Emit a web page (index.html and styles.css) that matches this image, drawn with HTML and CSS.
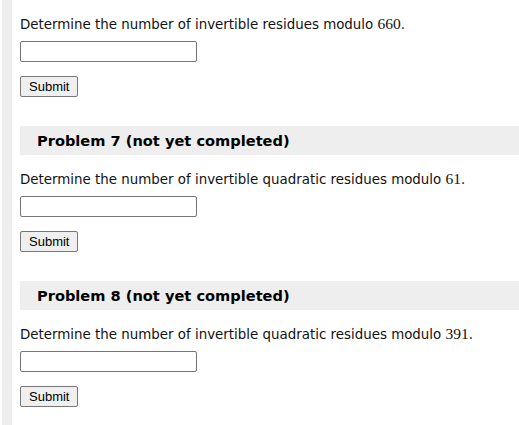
FILE: index.html
```html
<!DOCTYPE html>
<html lang="en">
<head>
    <meta charset="UTF-8">
    <meta name="viewport" content="width=device-width, initial-scale=1.0">
    <title>Problems</title>
    <link rel="stylesheet" href="styles.css">
</head>
<body>
    <div class="page">
        <div class="problem first">
            <p class="question">Determine the number of invertible residues modulo <span class="math">660</span>.</p>
            <input type="text" class="answer">
            <button class="submit">Submit</button>
        </div>
        <div class="problem">
            <h3 class="problem-title">Problem 7 (not yet completed)</h3>
            <p class="question">Determine the number of invertible quadratic residues modulo <span class="math">61</span>.</p>
            <input type="text" class="answer">
            <button class="submit">Submit</button>
        </div>
        <div class="problem">
            <h3 class="problem-title">Problem 8 (not yet completed)</h3>
            <p class="question">Determine the number of invertible quadratic residues modulo <span class="math">391</span>.</p>
            <input type="text" class="answer">
            <button class="submit">Submit</button>
        </div>
    </div>
</body>
</html>
```

FILE: styles.css
```css
body {
    margin: 0;
    padding: 0;
    background-color: #fff;
    font-family: "DejaVu Sans", Verdana, sans-serif;
    color: #111;
}
.page {
    margin-left: 2px;
    border-left: 10px solid #eee;
    padding-left: 8px;
    min-height: 425px;
}
.problem {
    margin-bottom: 29px;
}
.problem.first {
    padding-top: 16px;
}
.problem-title {
    margin: 0;
    background-color: #eee;
    height: 29px;
    line-height: 29px;
    padding-left: 17px;
    font-size: 14.6px;
    font-weight: bold;
    color: #000;
}
.question {
    margin: 0 0 7px;
    font-size: 13.4px;
    line-height: 18px;
    height: 18px;
}
.problem-title + .question {
    margin-top: 16px;
}
.math {
    font-family: "Liberation Serif", "Times New Roman", serif;
    font-size: 15.5px;
    line-height: 12px;
}
.answer {
    display: block;
    box-sizing: border-box;
    width: 177px;
    height: 21px;
    margin: 0 0 14px;
    padding: 1px 2px;
    border: 1px solid #767676;
    border-radius: 2px;
    font-family: "Liberation Sans", Arial, sans-serif;
    font-size: 13px;
}
.submit {
    display: block;
    box-sizing: border-box;
    height: 21px;
    padding: 1px 8px;
    background-color: #efefef;
    border: 1px solid #767676;
    border-radius: 2px;
    font-family: "Liberation Sans", Arial, sans-serif;
    font-size: 13px;
    color: #000;
}
```
